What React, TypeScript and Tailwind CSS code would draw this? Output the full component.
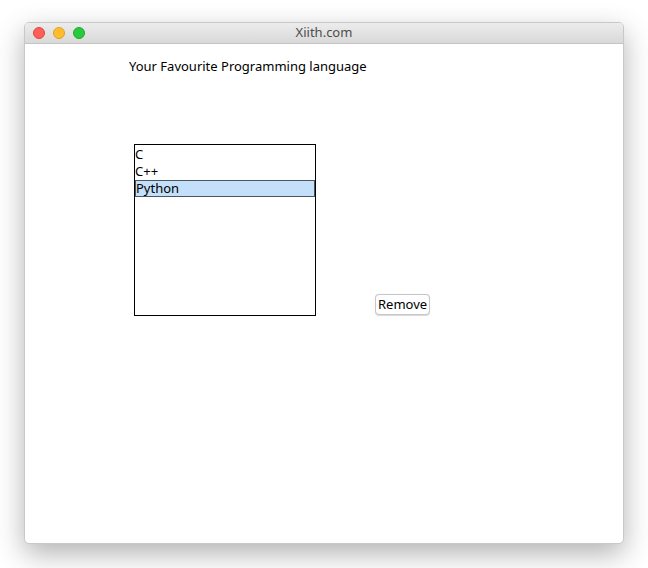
export default function App() {
  const items = ["C", "C++", "Python"];
  return (
    <div className="h-[568px] w-[648px] bg-white pt-[22px] pl-[24px] font-['Liberation_Sans',Arial,sans-serif]">
      <div className="flex h-[522px] w-[600px] flex-col overflow-hidden rounded-[5px] border border-[#c8c8c8] bg-white shadow-[0_10px_28px_rgba(0,0,0,0.3)]">
        <div className="relative flex h-[21px] shrink-0 items-center justify-center border-b border-[#c4c4c4] bg-gradient-to-b from-[#ececec] to-[#d9d9d9]">
          <div className="absolute left-[8px] top-[4px] flex gap-[8px]">
            <span className="h-[12px] w-[12px] rounded-full border border-[#e0443e] bg-[#fe5f57]" />
            <span className="h-[12px] w-[12px] rounded-full border border-[#dea123] bg-[#febc2e]" />
            <span className="h-[12px] w-[12px] rounded-full border border-[#1aab29] bg-[#28c840]" />
          </div>
          <span className="text-[13px] text-[#4d4d4d]">Xiith.com</span>
        </div>
        <div className="flex-1">
          <div className="mt-[14px] pl-[104px] text-[13px] leading-[16px] text-black">
            Your Favourite Programming language
          </div>
          <div className="mt-[70px] flex items-end pl-[109px]">
            <div className="h-[172px] w-[182px] border border-black pt-[1px] text-[13px] leading-[17px] text-black">
              {items.map((it) =>
                it === "Python" ? (
                  <div key={it} className="h-[17px] border border-[#4a5560] bg-[#c3dff9] leading-[15px]">
                    {it}
                  </div>
                ) : (
                  <div key={it} className="h-[17px]">{it}</div>
                )
              )}
            </div>
            <button className="mb-[1px] ml-[59px] h-[21px] rounded-[4px] border border-[#c6c6c6] bg-white px-[2px] text-[13px] leading-[17px] text-black shadow-[0_0.5px_1px_rgba(0,0,0,0.15)]">
              Remove
            </button>
          </div>
        </div>
      </div>
    </div>
  );
}
